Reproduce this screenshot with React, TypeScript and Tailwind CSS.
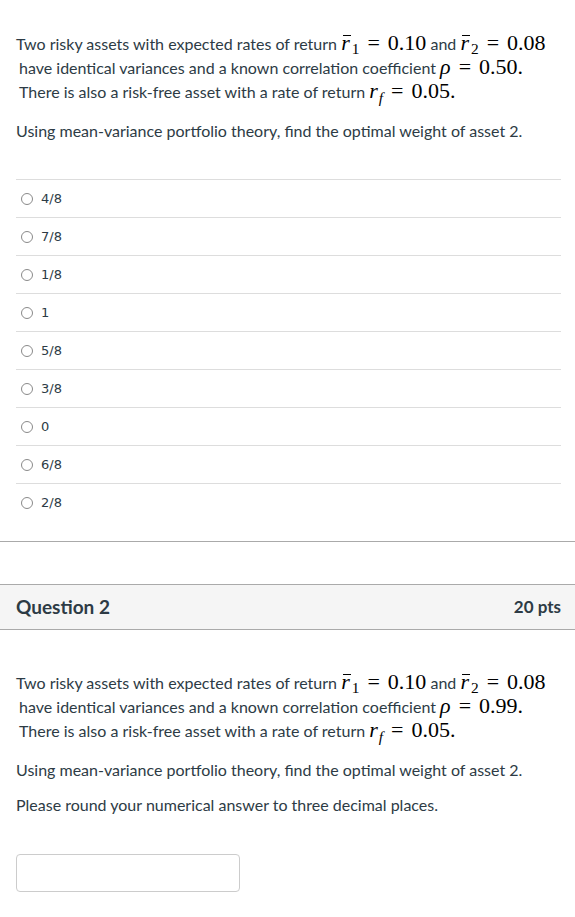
import React from 'react'

const OPTIONS = ['4/8', '7/8', '1/8', '1', '5/8', '3/8', '0', '6/8', '2/8']

// italic r with a bar accent, KaTeX-ish
function RBar({ sub }: { sub: string }) {
  return (
    <span className="whitespace-nowrap">
      <span className="relative inline-block pr-[1px] leading-[18px] italic">
        r
        <span className="absolute left-[2px] right-[0px] top-[1px] h-[1px] bg-black" />
      </span>
      <span className="relative top-[4px] ml-[1px] text-[0.7em]">{sub}</span>
    </span>
  )
}

function M({ children }: { children: React.ReactNode }) {
  return (
    <span className="whitespace-nowrap font-['Liberation_Serif','DejaVu_Serif',serif] text-[22px] leading-[0] text-black">
      {children}
    </span>
  )
}

function Eq() {
  return <span className="mx-[8px]">=</span>
}

function Stem({ rho }: { rho: string }) {
  return (
    <div className="text-[16px] leading-[24px]">
      <div>
        Two risky assets with expected rates of return{' '}
        <M>
          <RBar sub="1" />
          <Eq />
          0.10
        </M>{' '}
        and{' '}
        <M>
          <RBar sub="2" />
          <Eq />
          0.08
        </M>
      </div>
      <div className="pl-[3px]">
        have identical variances and a known correlation coefficient{' '}
        <M>
          <span className="italic">ρ</span>
          <Eq />
          {rho}.
        </M>
      </div>
      <div className="pl-[3px]">
        There is also a risk-free asset with a rate of return{' '}
        <M>
          <span className="italic">r</span>
          <span className="relative top-[5px] ml-[1px] text-[0.7em] italic">f</span>
          <Eq />
          0.05.
        </M>
      </div>
    </div>
  )
}

export default function App() {
  return (
    <div className="min-h-screen bg-white font-['Lato','Noto_Sans',sans-serif] text-[#2d3b45]">
      {/* question 1 */}
      <div className="border-b border-[#aaaaaa] pb-[20px]">
        <div className="px-4 pt-[32px]">
          <Stem rho="0.50" />
          <p className="mt-[15px] text-[16px] leading-[24px]">
            Using mean-variance portfolio theory, find the optimal weight of asset 2.
          </p>
        </div>
        <div className="mx-4 mt-[36px] mr-[14px]">
          {OPTIONS.map(o => (
            <label key={o} className="flex h-[38px] items-center border-t border-[#dddddd] pl-[5px]">
              <span className="h-[12px] w-[12px] rounded-full border border-[#8a8a8a] bg-white" />
              <span className="ml-[8px] font-['DejaVu_Sans',sans-serif] text-[13px] text-[#2d3b45]">{o}</span>
            </label>
          ))}
        </div>
      </div>

      {/* question 2 */}
      <div className="mt-[42px] flex h-[46px] items-center justify-between border-y border-[#aaaaaa] bg-[#f5f5f5] px-4 pr-[14px]">
        <span className="text-[19px] font-bold">Question 2</span>
        <span className="text-[17px] font-bold">20 pts</span>
      </div>
      <div className="px-4 pt-[41px]">
        <Stem rho="0.99" />
        <p className="mt-[15px] text-[16px] leading-[24px]">
          Using mean-variance portfolio theory, find the optimal weight of asset 2.
        </p>
        <p className="mt-[11px] text-[16px] leading-[24px]">Please round your numerical answer to three decimal places.</p>
        <input
          type="text"
          className="mt-[37px] h-[38px] w-[224px] rounded-[4px] border border-[#cccccc] bg-white px-2 outline-none"
        />
      </div>
    </div>
  )
}
